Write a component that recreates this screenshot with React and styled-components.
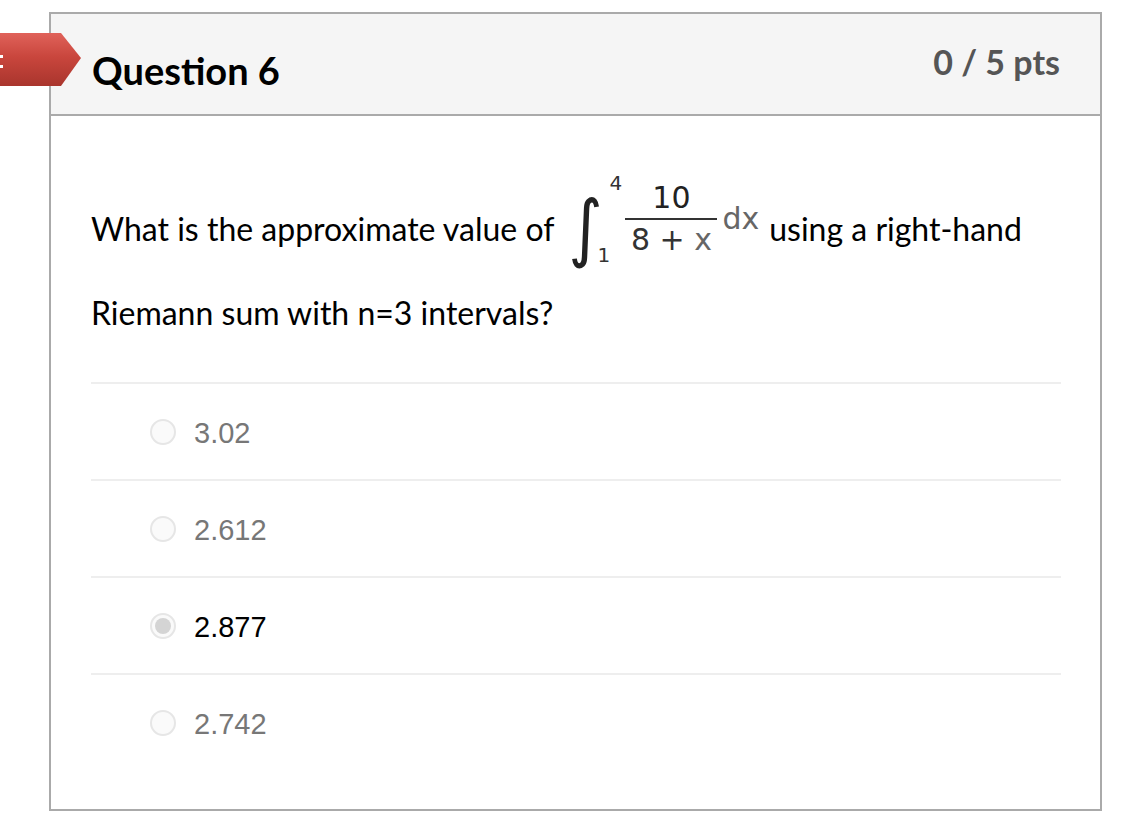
import styled, { createGlobalStyle } from "styled-components"

const GlobalStyle = createGlobalStyle`
  html, body {
    margin: 0;
    padding: 0;
    background: #fff;
  }
  body {
    font-family: Lato, "Liberation Sans", sans-serif;
  }
`

const Page = styled.div`
  position: relative;
  width: 1138px;
  height: 820px;
  padding: 12px 0 0 49px;
  box-sizing: border-box;
`

const Flag = styled.svg`
  position: absolute;
  left: 0;
  top: 31px;
`

const Card = styled.div`
  width: 1053px;
  height: 799px;
  box-sizing: border-box;
  border: 2px solid #aaa;
  display: flex;
  flex-direction: column;
`

const Header = styled.div`
  height: 102px;
  box-sizing: border-box;
  background: #f5f5f5;
  border-bottom: 2px solid #aaa;
  display: flex;
  justify-content: space-between;
  padding: 0 40px 0 41px;
`

const Title = styled.h2`
  margin: 0;
  padding-top: 33px;
  font-family: Lato, sans-serif;
  font-weight: 700;
  font-size: 38px;
  line-height: 46px;
  color: #000;
`

const Points = styled.div`
  padding-top: 28px;
  font-family: Lato, sans-serif;
  font-weight: 700;
  font-size: 34px;
  line-height: 40px;
  color: #555;
`

const Body = styled.div`
  padding: 0 39px 0 40px;
`

const QuestionText = styled.div`
  font-family: Lato, sans-serif;
  font-size: 32px;
  color: #000;
  padding-top: 52px;
`

const Line = styled.div`
  display: flex;
  align-items: center;
  white-space: nowrap;
  height: ${p => p.$h}px;
  margin-bottom: ${p => p.$mb || 0}px;
`

const Integral = styled.span`
  display: inline-flex;
  align-items: center;
  margin: 0 10px 0 14px;
  font-family: "DejaVu Sans", sans-serif;
  color: #222;
`

const Sign = styled.span`
  position: relative;
  width: 44px;
  height: 70px;
  display: flex;
  align-items: center;
`

const SignGlyph = styled.span`
  font-size: 66px;
  line-height: 0.9;
  display: block;
  width: 22px;
  letter-spacing: -12px;
  overflow: visible;
  transform: scaleY(1.12);
`

const Limit = styled.span`
  position: absolute;
  font-size: 20px;
  line-height: 20px;
  color: #333;
  left: ${p => p.$x}px;
  top: ${p => p.$y}px;
`

const Fraction = styled.span`
  display: inline-flex;
  flex-direction: column;
  align-items: center;
  width: 92px;
  margin-left: 13px;
  margin-bottom: 18px;
  font-size: 30px;
  line-height: 32px;
`

const Num = styled.span`
  padding-bottom: 4px;
  border-bottom: 2px solid #333;
  align-self: stretch;
  text-align: center;
`

const Den = styled.span`
  padding-top: 4px;
  color: #333;
`

const Var = styled.span`
  color: #666;
`

const Dx = styled.span`
  font-size: 30px;
  color: #666;
  margin-left: 5px;
  margin-bottom: 20px;
`

const AnswerList = styled.div`
  display: flex;
  flex-direction: column;
`

const Answer = styled.div`
  border-top: 2px solid #eee;
  height: 95px;
  display: flex;
  align-items: center;
  padding-left: 59px;
  gap: 18px;
`

const Radio = styled.span`
  width: 22px;
  height: 22px;
  border-radius: 50%;
  border: 2px solid #e6e6e6;
  background: #fafafa;
  display: flex;
  align-items: center;
  justify-content: center;
  box-sizing: content-box;
  &::after {
    content: "";
    display: ${p => (p.$checked ? "block" : "none")};
    width: 16px;
    height: 16px;
    border-radius: 50%;
    background: #d4d4d4;
  }
`

const AnswerText = styled.span`
  font-family: "Liberation Sans", Arial, sans-serif;
  font-size: 29px;
  color: ${p => (p.$checked ? "#000" : "#777")};
  margin-top: 4px;
`

const answers = [
  { text: "3.02" },
  { text: "2.612" },
  { text: "2.877", checked: true },
  { text: "2.742" },
]

function App() {
  return (
    <>
      <GlobalStyle />
      <Page>
        <Flag width="82" height="58" viewBox="0 0 82 58">
          <defs>
            <linearGradient id="flagRed" x1="0" y1="0" x2="0" y2="1">
              <stop offset="0" stopColor="#e0625a" />
              <stop offset="0.45" stopColor="#c9463d" />
              <stop offset="1" stopColor="#a9352d" />
            </linearGradient>
          </defs>
          <polygon points="0,2 61,2 81,27 61,55 0,55" fill="url(#flagRed)" />
          <rect x="0" y="24" width="3" height="3" fill="#fff" />
          <rect x="0" y="34" width="3" height="3" fill="#fff" />
        </Flag>
        <Card>
          <Header>
            <Title>Question 6</Title>
            <Points>0 / 5 pts</Points>
          </Header>
          <Body>
            <QuestionText>
              <Line $h={120}>
                What is the approximate value of
                <Integral>
                  <Sign>
                    <SignGlyph>∫</SignGlyph>
                    <Limit $x={29} $y={52}>1</Limit>
                    <Limit $x={41} $y={-20}>4</Limit>
                  </Sign>
                  <Fraction>
                    <Num>10</Num>
                    <Den>
                      8 + <Var>x</Var>
                    </Den>
                  </Fraction>
                  <Dx>dx</Dx>
                </Integral>
                using a right-hand
              </Line>
              <Line $h={48} $mb={46}>
                Riemann sum with n=3 intervals?
              </Line>
            </QuestionText>
            <AnswerList>
              {answers.map(a => (
                <Answer key={a.text}>
                  <Radio $checked={a.checked} />
                  <AnswerText $checked={a.checked}>{a.text}</AnswerText>
                </Answer>
              ))}
            </AnswerList>
          </Body>
        </Card>
      </Page>
    </>
  )
}

export default App
